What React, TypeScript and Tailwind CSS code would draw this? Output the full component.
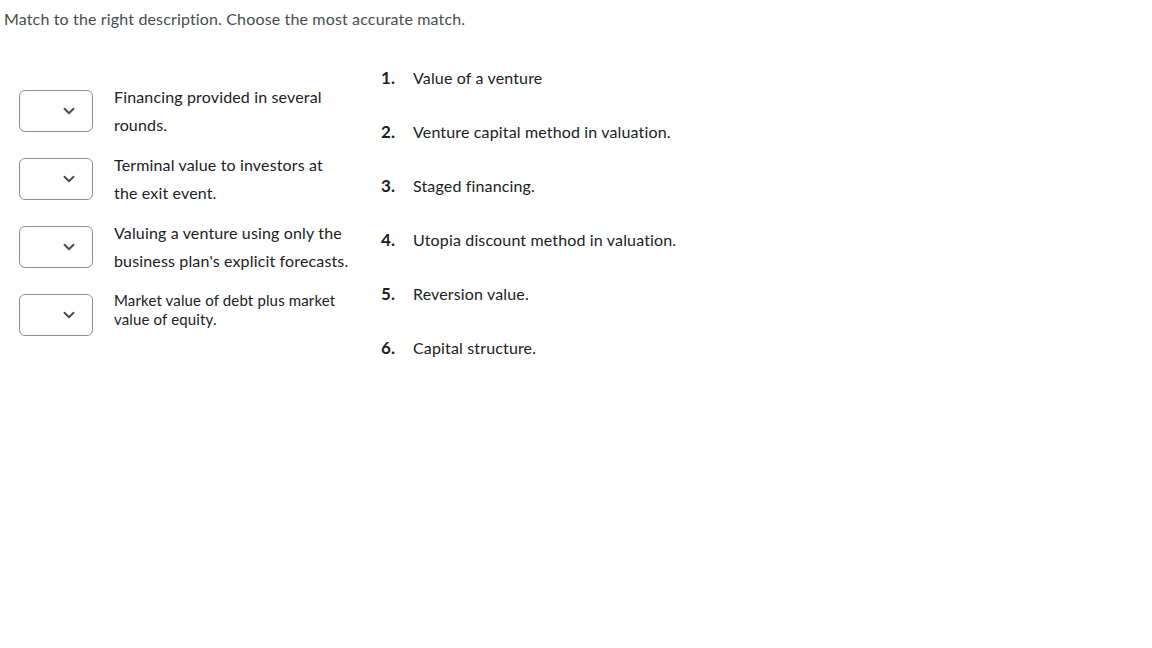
import { ChevronDown } from "lucide-react"

const descriptions = [
  { text: "Financing provided in several rounds.", tight: false },
  { text: "Terminal value to investors at the exit event.", tight: false },
  { text: "Valuing a venture using only the business plan's explicit forecasts.", tight: false },
  { text: "Market value of debt plus market value of equity.", tight: true },
]

const answers = [
  "Value of a venture",
  "Venture capital method in valuation.",
  "Staged financing.",
  "Utopia discount method in valuation.",
  "Reversion value.",
  "Capital structure.",
]

function SelectBox() {
  return (
    <div className="flex h-[42px] w-[74px] shrink-0 items-center justify-end rounded-[6px] border border-[#8a8c8e] bg-white pr-[14px]">
      <ChevronDown className="h-[18px] w-[18px] text-[#494c4e]" strokeWidth={2.5} />
    </div>
  )
}

export default function App() {
  return (
    <div className="min-h-[648px] bg-white text-[16px] tracking-[0.15px] text-[#202122]" style={{ fontFamily: "Lato, 'Liberation Sans', sans-serif" }}>
      <p className="px-[4px] pt-[9px] leading-[20px] text-[#494c4e]">
        Match to the right description. Choose the most accurate match.
      </p>

      <div className="flex">
        <div className="w-[381px] shrink-0 pl-[19px] pt-[48px]">
          {descriptions.map((d, i) => (
            <div key={i} className="flex h-[68px] items-center gap-[21px]">
              <SelectBox />
              {d.tight ? (
                <p className="mb-[10px] w-[235px] text-[15px] leading-[19px]">{d.text}</p>
              ) : (
                <p className="w-[235px] leading-[28px]">{d.text}</p>
              )}
            </div>
          ))}
        </div>

        <div className="pt-[22px]">
          {answers.map((a, i) => (
            <div key={i} className="flex h-[54px] items-center">
              <span className="w-[32px] text-[17px] font-bold leading-[20px] text-[#202122]">{i + 1}.</span>
              <span className="leading-[20px]">{a}</span>
            </div>
          ))}
        </div>
      </div>
    </div>
  )
}
